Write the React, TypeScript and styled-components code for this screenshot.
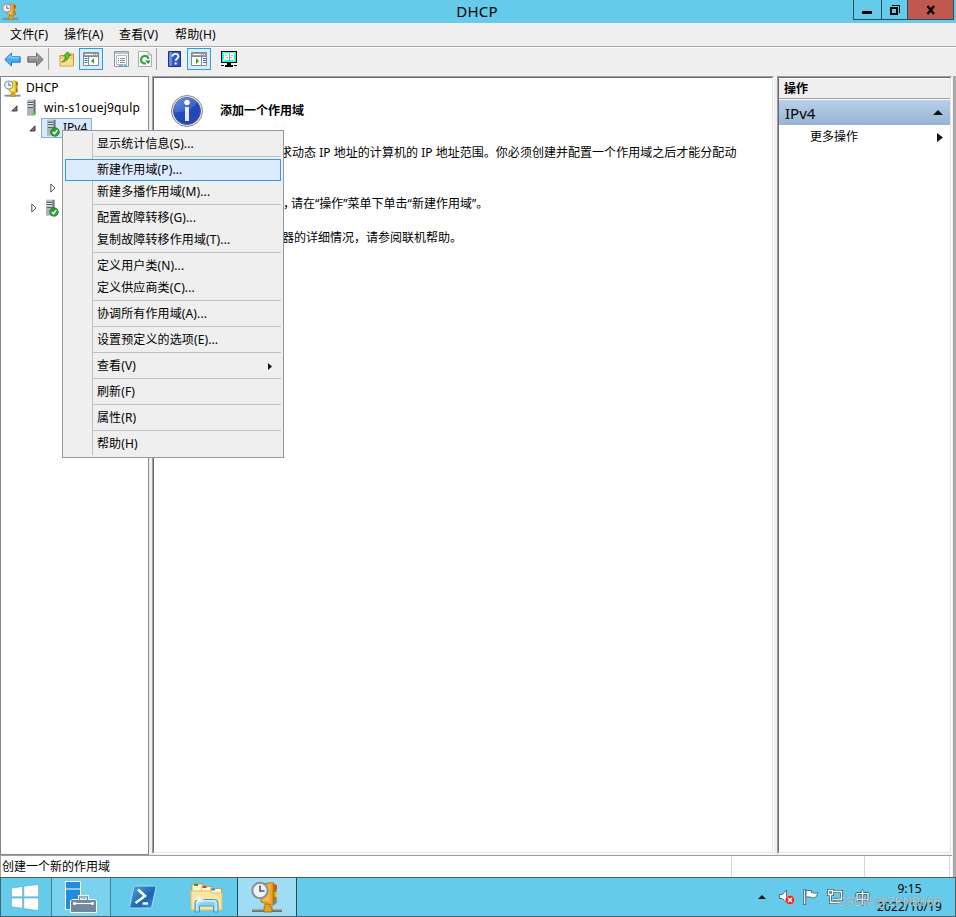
import React from "react";
import styled, { createGlobalStyle } from "styled-components";

const Global = createGlobalStyle`
  * { box-sizing: border-box; }
  body { margin: 0; overflow: hidden; }
`;

const sans = `"Noto Sans", "Noto Sans CJK SC", sans-serif`;

const Screen = styled.div`
  position: relative;
  width: 956px;
  height: 917px;
  display: flex;
  flex-direction: column;
  background: #efefef;
  color: #000;
  font: 12px/20px ${sans};
  white-space: nowrap;
  overflow: hidden;
`;

/* ---------- title bar ---------- */
const TitleBar = styled.header`
  display: grid;
  grid-template-columns: 103px 1fr 103px;
  height: 23px;
  background: #66cbea;
`;
const TitleIcon = styled.span`
  padding: 3px 0 0 2px;
  line-height: 0;
`;
const Title = styled.h1`
  margin: 0 2px 0 0;
  text-align: center;
  font-weight: 400;
  font-size: 15px;
  line-height: 23px;
  letter-spacing: 0.2px;
`;
const WindowButtons = styled.div`
  display: flex;
  height: 20px;
  border: 1px solid #2b4d59;
  border-top: 0;
  margin-right: 2px;
`;
const WindowButton = styled.button<{ $w: number; $close?: boolean }>`
  width: ${(p) => p.$w}px;
  padding: 0;
  border: 0;
  line-height: 0;
  background: ${(p) => (p.$close ? "#c1584f" : "transparent")};
  & + & { border-left: 1px solid #2b4d59; }
`;

/* ---------- menu bar and toolbar ---------- */
const MenuBar = styled.nav`
  display: flex;
  gap: 16px;
  height: 24px;
  padding: 2px 0 0 10px;
  border-bottom: 1px solid #a9a9a9;
  letter-spacing: 0.15px;
`;
const MenuLabel = styled.span<{ $w: number }>`
  width: ${(p) => p.$w}px;
`;
const ToolBar = styled.div`
  display: flex;
  align-items: center;
  height: 29px;
  padding: 0 0 6px 4px;
  border-top: 1px solid #fff;
`;
const Tool = styled.button<{ $active?: boolean; $ml?: number }>`
  width: 24px;
  height: 22px;
  margin: 0 0 0 ${(p) => p.$ml ?? 0}px;
  padding: 0;
  border: 1px solid ${(p) => (p.$active ? "#2a9fd8" : "transparent")};
  background: ${(p) => (p.$active ? "#dcebfb" : "transparent")};
  display: grid;
  place-items: center;
`;
const ToolDivider = styled.i<{ $ml: number }>`
  width: 1px;
  height: 22px;
  margin-left: ${(p) => p.$ml}px;
  background: #a5a5a5;
`;

/* ---------- panes ---------- */
const Workspace = styled.main`
  display: flex;
  height: 779px;
`;
const TreePane = styled.aside`
  width: 149px;
  margin-right: 3px;
  padding-top: 1px;
  border: 1px solid #828790;
  background: #fff;
`;
const TreeRow = styled.div<{ $indent: number }>`
  display: flex;
  align-items: center;
  height: 20px;
  padding-left: ${(p) => p.$indent}px;
`;
const TreeGap = styled.div`
  height: 40px;
`;
const Expander = styled.span`
  width: 13px;
  height: 20px;
  display: grid;
  place-items: center;
  margin-right: 2px;
`;
const NodeLabel = styled.span<{ $ml: number; $spacing?: number }>`
  margin-left: ${(p) => p.$ml}px;
  letter-spacing: ${(p) => p.$spacing ?? 0}px;
`;
const SelectedNode = styled.span`
  display: flex;
  align-items: center;
  width: 51px;
  height: 20px;
  padding-left: 1px;
  border: 1px solid #84acdd;
  background: #d9e8fb;
  line-height: 18px;
`;
const SunkenPane = styled.section<{ $w: number; $ml?: number }>`
  width: ${(p) => p.$w}px;
  height: 778px;
  margin-left: ${(p) => p.$ml ?? 0}px;
  border: 1px solid;
  border-color: #a0a0a0 #fff #fff #a0a0a0;
`;
const SunkenInner = styled.div`
  height: 100%;
  border: 1px solid;
  border-color: #696969 #e3e3e3 #e3e3e3 #696969;
  background: #fff;
`;
const Heading = styled.div`
  display: flex;
  align-items: center;
  height: 34px;
  margin: 16px 0 0 16px;
`;
const HeadingText = styled.h2`
  margin: 0 0 0 16px;
  font-size: 12px;
  line-height: 20px;
  font-weight: 700;
`;
const Para = styled.p<{ $top: number; $left: number; $spacing?: number }>`
  margin: ${(p) => p.$top}px 0 0 ${(p) => p.$left}px;
  line-height: 20px;
  letter-spacing: ${(p) => p.$spacing ?? 0}px;
`;
const Comma = styled.span`
  display: inline-block;
  width: 12px;
  padding-left: 4px;
`;
const ActionsTitle = styled.h3`
  margin: 0;
  padding-left: 5px;
  height: 21px;
  border-top: 1px solid #fff;
  border-bottom: 1px solid #a0a0a0;
  background: #efefef;
  font-size: 12px;
  line-height: 19px;
`;
const ActionsGroup = styled.div`
  display: flex;
  align-items: center;
  justify-content: space-between;
  height: 26px;
  padding: 0 7px 0 6px;
  border-top: 1px solid #fff;
  background: linear-gradient(#b9d0e9, #98b3d3);
  font-size: 15px;
`;
const ActionItem = styled.div`
  display: flex;
  align-items: center;
  justify-content: space-between;
  height: 24px;
  padding: 0 7px 0 31px;
`;
const Edge = styled.i`
  flex: 1;
  margin-left: 1px;
  background: #ababab;
  height: 801px;
`;

/* ---------- status bar ---------- */
const StatusBar = styled.footer`
  display: flex;
  width: 952px;
  height: 22px;
  border-top: 1px solid #a0a0a0;
  border-left: 1px solid #a0a0a0;
  background: #fff;
`;
const StatusCell = styled.span<{ $w: number }>`
  width: ${(p) => p.$w}px;
  height: 21px;
  padding-left: 1px;
  line-height: 22px;
  border-right: 1px solid #d7d7d7;
`;

/* ---------- taskbar ---------- */
const TaskBar = styled.div`
  display: flex;
  height: 40px;
  border: 1px solid #48606c;
  background: #66cbea;
`;
const TaskButton = styled.button<{ $w: number; $tone?: "open" | "active" }>`
  width: ${(p) => p.$w}px;
  height: 38px;
  padding: 0;
  display: grid;
  place-items: center;
  border: 0 solid ${(p) => (p.$tone === "active" ? "#1f4a59" : "#3f7f95")};
  border-width: ${(p) => (p.$tone ? "0 1px" : "0")};
  background: ${(p) => (p.$tone === "active" ? "#a0dcf3" : p.$tone === "open" ? "#7ad2ee" : "transparent")};
`;
const Tray = styled.div`
  display: flex;
  align-items: center;
  gap: 8px;
  margin-left: auto;
`;
const ShowHidden = styled.span`
  margin-right: 5px;
  line-height: 0;
`;
const InputMode = styled.span`
  width: 15px;
  margin-left: 3px;
  color: #fff;
  font-size: 15px;
  text-shadow: 1px 0 #3b6271, -1px 0 #3b6271, 0 1px #3b6271, 0 -1px #3b6271;
`;
const Clock = styled.div`
  width: 75px;
  margin: 0 8px 0 -6px;
  text-align: center;
  line-height: 18px;
  padding-top: 1px;
  letter-spacing: 0.1px;
`;
const Watermark = styled.span`
  position: absolute;
  left: 837px;
  top: 892px;
  font: 12.2px/20px "Liberation Sans", sans-serif;
  color: rgba(225, 232, 236, 0.72);
  text-shadow: 0 0 1px rgba(70, 90, 100, 0.8);
`;

/* ---------- context menu ---------- */
const ContextMenu = styled.div`
  position: absolute;
  left: 62px;
  top: 130px;
  width: 222px;
  padding: 2px;
  border: 1px solid #979797;
  background: linear-gradient(90deg, transparent 27px, #c0c0c0 27px, #c0c0c0 28px, transparent 28px) 2px 2px / 216px 322px no-repeat #efefef;
`;
const MenuItem = styled.div<{ $hot?: boolean }>`
  display: flex;
  align-items: center;
  justify-content: space-between;
  height: 22px;
  padding: 0 8px 0 31px;
  border: 1px solid ${(p) => (p.$hot ? "#2a9fe0" : "transparent")};
  background: ${(p) => (p.$hot ? "#dcebfd" : "transparent")};
  line-height: 20px;
  letter-spacing: 0.12px;
`;
const MenuRule = styled.div`
  height: 1px;
  margin: 1px 0 2px 28px;
  background: #c0c0c0;
`;

/* ---------- drawings ---------- */
const DhcpIcon = ({ size = 16, tree = false }: { size?: number; tree?: boolean }) => (
  <svg width={size} height={size} viewBox="0 0 32 32">
    <path d="M1 29.500h30" stroke="#6f6f6f" strokeWidth="3" />
    <path d="M1 28.800h30" stroke="#bdbdbd" strokeWidth="1" />
    <path d="M14 23h5v3h2v5h-8v-5h1z" fill="#e5a51d" stroke="#99680e" strokeWidth=".8" />
    <path d="M22 2l3.500 2v18L22 24.500z" fill="#b06f10" />
    <path d="M23.500 4H26v5h-2.500z" fill="#df4a2a" />
    <path d="M23.500 11H26v5h-2.500z" fill="#f0c020" />
    <path d="M23.500 18H26v4h-2.500z" fill="#4b9fc5" />
    <path d="M10 3l12-1.500v23L10 21z" fill={tree ? "#f3dc27" : "#eda62a"} stroke={tree ? "#a99312" : "#bd7a15"} />
    <path d="M11.500 5l7-.8v17l-7-2z" fill={tree ? "#fff16a" : "#f8c65c"} opacity=".7" />
    <circle cx="9" cy="9.500" r="7.700" fill="#edf3f6" stroke="#868f96" strokeWidth="2" />
    <path d="M9 4.500V10h4.500" fill="none" stroke="#4c5a64" strokeWidth="1.600" />
  </svg>
);

const ServerIcon = ({ ok = false }: { ok?: boolean }) => (
  <svg width="17" height="18" viewBox="0 0 17 18">
    <path d="M4 1.500l1-1h7.500v15l-1 1H4z" fill="#c2cdd0" />
    <path d="M4 1.500h6.500v15H4z" fill="#a9b7bb" />
    <path d="M10.500 1.500l2-1v15l-2 1z" fill="#65757a" />
    <path d="M5 3.500h5M5 5.500h5M5 8.500h5" stroke="#4f5f65" />
    <path d="M5 4.500h5M5 7h5" stroke="#edf3f4" />
    {ok ? (
      <>
        <circle cx="12" cy="13" r="4.300" fill="#2fa02f" stroke="#167220" strokeWidth=".7" />
        <path d="M9.800 13l1.700 1.800 2.800-3.700" fill="none" stroke="#fff" strokeWidth="1.500" />
      </>
    ) : (
      <path d="M9 13.500h2.500v2H9z" fill="#5ee819" />
    )}
  </svg>
);

const Opened = () => (
  <svg width="7" height="7" viewBox="0 0 7 7"><path d="M6 .8V6H.8z" fill="#777" stroke="#333" strokeWidth=".9" /></svg>
);
const Closed = () => (
  <svg width="6" height="10" viewBox="0 0 6 10"><path d="M.8 1v8L5 5z" fill="#fff" stroke="#444" strokeWidth=".9" /></svg>
);

const Arrow = ({ back = false }: { back?: boolean }) => (
  <svg width="17" height="15" viewBox="0 0 17 15">
    <path
      d={back ? "M.8 7.500L7.500 1v3.800h8.700v5.400H7.500V14z" : "M16.200 7.500L9.500 1v3.800H.8v5.400h8.700V14z"}
      fill={back ? "#3fb0f2" : "#929292"}
      stroke={back ? "#2379bb" : "#686868"}
    />
    <path d={back ? "M3.500 6.500L7 3.300v2.500h8" : "M2 5.800h8.500V3.500"} fill="none" stroke={back ? "#9bdcff" : "#c2c2c2"} />
  </svg>
);

const FolderUp = () => (
  <svg width="16" height="16" viewBox="0 0 16 16">
    <path d="M1 4.500h6l1-1.500h6.500v12H1z" fill="#f0cf71" stroke="#c69a3c" />
    <path d="M1.500 8h12.500v6.500H1.500z" fill="#f8de8f" />
    <path d="M2.500 11C5 10 6 8 6.500 5H4.500L8.500.8 12 4.500h-2C9.500 8 7 11 2.500 11z" fill="#58c229" stroke="#2f8a17" strokeWidth=".7" />
  </svg>
);

const PaneIcon = ({ right = false }: { right?: boolean }) => (
  <svg width="16" height="14" viewBox="0 0 16 14">
    <path d="M.5.500h15v13H.5z" fill="#fff" stroke="#818a95" />
    <path d="M1 1h14v3H1z" fill="#929ca8" />
    <path d="M2 2.500h8M11 2.500h1M13 2.500h1" stroke="#fff" />
    {right ? (
      <>
        <path d="M10.500 5v9M.5 4.500h15" stroke="#818a95" />
        <path d="M12 6.500h3M12 8.500h3M12 10.500h3" stroke="#3f78b4" />
        <path d="M5 6v6l3-3z" fill="#35a51c" />
      </>
    ) : (
      <>
        <path d="M5.500 5v9M.5 4.500h15" stroke="#818a95" />
        <path d="M1.500 6.500h3M1.500 8.500h3M1.500 10.500h3" stroke="#3f78b4" />
        <path d="M11 6v6L8 9z" fill="#35a51c" />
      </>
    )}
  </svg>
);

const PropertiesIcon = () => (
  <svg width="15" height="16" viewBox="0 0 15 16">
    <path d="M.5.500h14v15H.5z" fill="#fafafa" stroke="#9098a2" />
    <path d="M1 2h13" stroke="#a9b0b8" strokeWidth="1.500" />
    <path d="M2.500 4.500h10v9h-10z" fill="#fff" stroke="#b4bac2" />
    <path d="M4 7.500h1M4 9.500h1M4 11.500h1M6 7.500h5M6 9.500h5M6 11.500h5" stroke="#7d8996" />
    <path d="M5 14.500h4M10 14.500h3" stroke="#4eb4d9" />
  </svg>
);

const RefreshIcon = () => (
  <svg width="14" height="16" viewBox="0 0 14 16">
    <path d="M.5.500h9.500l3.500 3.500v11.500H.5z" fill="#fdfdfd" stroke="#aaa" />
    <path d="M10 .5V4h3.500" fill="none" stroke="#aaa" />
    <path d="M10.600 8A3.800 3.800 0 1 0 8 12.300" fill="none" stroke="#2daa3a" strokeWidth="2.200" />
    <path d="M7 9.500h5.500L10.500 13z" fill="#189326" />
  </svg>
);

const HelpIcon = () => (
  <svg width="14" height="16" viewBox="0 0 14 16">
    <path d="M.5.500h12v15H.5z" fill="#3459c3" stroke="#1c2e85" />
    <path d="M1 1h3v14H1z" fill="#6a8be0" />
    <path d="M4.500 5.500C4.500 2 10.500 2 10.500 5.300c0 2.200-2.800 2.200-2.800 4.500" fill="none" stroke="#fff" strokeWidth="1.800" />
    <path d="M6.700 11.500h2v2h-2z" fill="#fff" />
  </svg>
);

const ConsoleIcon = () => (
  <svg width="16" height="16" viewBox="0 0 16 16" shapeRendering="crispEdges">
    <path d="M0 0h16v12H0z" fill="#000" />
    <path d="M1 1h14v10H1z" fill="#0ff" />
    <path d="M3 2h4l1 1 1-1h4v7H9l-1 1-1-1H3z" fill="#fff" />
    <path d="M2 1h2v2H2zM12 1h2v2h-2zM2 8h2v2H2zM12 8h2v2h-2z" fill="#f3ec35" />
    <path d="M8 3v7" stroke="#999" />
    <path d="M4 4.500h2M5 6.500h2M10 4.500h2M9 6.500h2" stroke="#bbb" />
    <path d="M6 12h4v2H6zM0 14h3v1H0zM4 14h8v2H4zM13 14h3v1h-3z" fill="#000" />
  </svg>
);

const InfoIcon = () => (
  <svg width="34" height="34" viewBox="0 0 34 34">
    <defs>
      <linearGradient id="info" x1="0" y1="0" x2="0.600" y2="1">
        <stop offset="0" stopColor="#5483dc" />
        <stop offset=".5" stopColor="#1f4cc0" />
        <stop offset="1" stopColor="#2345b4" />
      </linearGradient>
    </defs>
    <circle cx="17" cy="17" r="15.500" fill="#e8e8e8" stroke="#8a8a8a" />
    <circle cx="17" cy="17" r="13.500" fill="url(#info)" stroke="#4c5c90" />
    <path d="M4 18C8 19 23 17 27 8 22 1 8 2 4 13z" fill="#fff" opacity=".15" />
    <circle cx="17" cy="8.500" r="2.700" fill="#fff" />
    <path d="M15 13h4v14h-4z" fill="#e9eaf0" />
  </svg>
);

const WindowsLogo = () => (
  <svg width="30" height="27" viewBox="0 0 30 27">
    <path d="M.5 4.200L11.500 2.500v10.300H.5zM12.800 2.300L27.500.500v12.300H12.800zM.5 14h11v10.300L.5 22.700zM12.800 14h14.700v12.500l-14.700-2z" fill="#fff" stroke="#4aa3c0" strokeWidth=".5" />
  </svg>
);

const ServerManager = () => (
  <svg width="34" height="34" viewBox="0 0 34 34">
    <path d="M1.500 1.500h15v28h-15z" fill="#1f8ddb" stroke="#fff" />
    <path d="M1.500 9h15" stroke="#fff" />
    <path d="M15.500 20v-3.500h8V20" fill="none" stroke="#fff" strokeWidth="3" />
    <path d="M8 19.500h23l1.500 1.500v11.500h-26V21z" fill="#71889a" stroke="#fff" />
    <path d="M15.500 20v-3.200h8V20" fill="none" stroke="#71889a" strokeWidth="1.200" />
    <path d="M9 23.500h21" stroke="#fff" strokeWidth="1.200" />
    <path d="M10.500 22v3M28.500 22v3" stroke="#fff" strokeWidth="2" />
  </svg>
);

const PowerShell = () => (
  <svg width="28" height="24" viewBox="0 0 28 24">
    <defs>
      <linearGradient id="ps" x1="0" y1="0" x2="1" y2="1">
        <stop offset="0" stopColor="#4fa4dc" />
        <stop offset=".6" stopColor="#1b66ae" />
        <stop offset="1" stopColor="#3d95cf" />
      </linearGradient>
    </defs>
    <path d="M6.500 1h19c1.200 0 1.600.8 1.300 2L23 21c-.3 1.200-1 2-2.200 2H2.200C1 23 .6 22.200.9 21L4.500 3c.3-1.200.8-2 2-2z" fill="url(#ps)" stroke="#a8d9ef" />
    <path d="M9 4.500l7 6.500L6.500 18" fill="none" stroke="#fff" strokeWidth="2.600" />
    <path d="M13.500 18.500H19" stroke="#fff" strokeWidth="2.300" />
  </svg>
);

const Explorer = () => (
  <svg width="33" height="31" viewBox="0 0 33 31">
    <path d="M1.500 4l2-2.500h9l1.500 3h8l1 2h8.500v18h-30z" fill="#edcf77" stroke="#c5a14b" />
    <path d="M3 3h8v6H3zM12 5h8v5h-8zM21 7h10v4H21z" fill="#fff7d8" />
    <path d="M4 2h4v2H4z" fill="#19a53a" />
    <path d="M12.500 4h4v2h-4z" fill="#d83c25" />
    <path d="M21 6.500h4v2h-4z" fill="#1b91d9" />
    <path d="M1 9h19l2 2h10v17H1z" fill="#f8e5a0" stroke="#dfbf66" />
    <path d="M5 30V21q0-3.500 3.500-3.500h16Q28 17.500 28 21v9h-4.500v-6h-14v6z" fill="#8fd0f0" stroke="#3c9ecb" />
    <path d="M7 29v-8q0-2 2-2h15q2 0 2 2v8" fill="none" stroke="#d7f1fc" strokeWidth="1.300" />
    <path d="M9 13v9M4.500 17.500h9M6 14.500l6 6M12 14.500l-6 6" stroke="#fff" strokeWidth=".8" />
  </svg>
);

const Triangle = ({ dir, w, h }: { dir: "up" | "right"; w: number; h: number }) => (
  <svg width={w} height={h} viewBox="0 0 10 10" preserveAspectRatio="none">
    <path d={dir === "up" ? "M0 10L5 0l5 10z" : "M0 0l10 5-10 5z"} fill="#111" />
  </svg>
);

const Speaker = () => (
  <svg width="16" height="16" viewBox="0 0 16 16">
    <path d="M.5 5.500h3l4-4.500v13l-4-4.500h-3z" fill="#fff" stroke="#355560" strokeWidth=".8" />
    <circle cx="11" cy="11" r="4.700" fill="#dd2b24" stroke="#f8d1cc" strokeWidth=".5" />
    <path d="M9 9l4 4M13 9l-4 4" stroke="#fff" strokeWidth="1.600" />
  </svg>
);
const Flag = () => (
  <svg width="16" height="16" viewBox="0 0 16 16">
    <path d="M.7.700h2v14.800h-2z" fill="#fff" stroke="#355560" strokeWidth=".8" />
    <path d="M3 1.500h5.500v2c2 .8 4 .8 6.500.2-1 2-1.500 3.500-2.500 4.800-2 .8-3.500.3-5-.5H3z" fill="#fff" stroke="#355560" strokeWidth=".8" />
  </svg>
);
const Network = () => (
  <svg width="17" height="16" viewBox="0 0 17 16">
    <path d="M6 2.500h8.500v8H6M7 13.500h6M1.500 1.500h4v4h-4zM3.500 5.500v8H7" fill="none" stroke="#3b6271" strokeWidth="3" />
    <path d="M6 2.500h8.500v8H6M7 13.500h6M1.500 1.500h4v4h-4zM3.500 5.500v8H7" fill="none" stroke="#fff" strokeWidth="1.300" />
  </svg>
);

const menuEntries: (string | null)[] = [
  "显示统计信息(S)...",
  null,
  "新建作用域(P)...",
  "新建多播作用域(M)...",
  null,
  "配置故障转移(G)...",
  "复制故障转移作用域(T)...",
  null,
  "定义用户类(N)...",
  "定义供应商类(C)...",
  null,
  "协调所有作用域(A)...",
  null,
  "设置预定义的选项(E)...",
  null,
  "查看(V)",
  null,
  "刷新(F)",
  null,
  "属性(R)",
  null,
  "帮助(H)",
];

export default function App() {
  return (
    <Screen>
      <Global />
      <TitleBar>
        <TitleIcon><DhcpIcon size={17} /></TitleIcon>
        <Title>DHCP</Title>
        <WindowButtons>
          <WindowButton $w={27}>
            <svg width="12" height="12"><path d="M1 7h10v3H1z" fill="#000" /></svg>
          </WindowButton>
          <WindowButton $w={27}>
            <svg width="11" height="12"><path d="M2 4h6v6H2z" fill="none" stroke="#000" strokeWidth="2" /><path d="M3 1.500h7.500V9" fill="none" stroke="#000" /></svg>
          </WindowButton>
          <WindowButton $w={46} $close>
            <svg width="10" height="10"><path d="M1.500 1l6.500 8M8 1L1.500 9" stroke="#000" strokeWidth="2.300" /></svg>
          </WindowButton>
        </WindowButtons>
      </TitleBar>

      <MenuBar>
        <MenuLabel $w={38}>文件(F)</MenuLabel>
        <MenuLabel $w={39}>操作(A)</MenuLabel>
        <MenuLabel $w={40}>查看(V)</MenuLabel>
        <MenuLabel $w={42}>帮助(H)</MenuLabel>
      </MenuBar>

      <ToolBar>
        <Tool $ml={-4}><Arrow back /></Tool>
        <Tool $ml={-1}><Arrow /></Tool>
        <ToolDivider $ml={1} />
        <Tool $ml={6}><FolderUp /></Tool>
        <Tool $active><PaneIcon /></Tool>
        <Tool $ml={6}><PropertiesIcon /></Tool>
        <Tool><RefreshIcon /></Tool>
        <ToolDivider $ml={-1} />
        <Tool $ml={6}><HelpIcon /></Tool>
        <Tool $active><PaneIcon right /></Tool>
        <Tool $ml={6}><ConsoleIcon /></Tool>
      </ToolBar>

      <Workspace>
        <TreePane>
          <TreeRow $indent={3}>
            <DhcpIcon size={17} tree />
            <NodeLabel $ml={5}>DHCP</NodeLabel>
          </TreeRow>
          <TreeRow $indent={7}>
            <Expander><Opened /></Expander>
            <ServerIcon />
            <NodeLabel $ml={4} $spacing={0.2}>win-s1ouej9qulp</NodeLabel>
          </TreeRow>
          <TreeRow $indent={25}>
            <Expander><Opened /></Expander>
            <SelectedNode>
              <ServerIcon ok />
              <NodeLabel $ml={3}>IPv4</NodeLabel>
            </SelectedNode>
          </TreeRow>
          <TreeGap />
          <TreeRow $indent={45}><Expander><Closed /></Expander></TreeRow>
          <TreeRow $indent={26}>
            <Expander><Closed /></Expander>
            <ServerIcon ok />
          </TreeRow>
        </TreePane>

        <SunkenPane $w={622}>
          <SunkenInner>
            <Heading>
              <InfoIcon />
              <HeadingText>添加一个作用域</HeadingText>
            </Heading>
            <Para $top={15} $left={126} $spacing={0.03}>求动态 IP 地址的计算机的 IP 地址范围。你必须创建并配置一个作用域之后才能分配动</Para>
            <Para $top={31} $left={125}><Comma>，</Comma>请在“操作”菜单下单击“新建作用域”。</Para>
            <Para $top={14} $left={128}>器的详细情况，请参阅联机帮助。</Para>
          </SunkenInner>
        </SunkenPane>

        <SunkenPane $w={175} $ml={3}>
          <SunkenInner>
            <ActionsTitle>操作</ActionsTitle>
            <ActionsGroup>
              IPv4
              <Triangle dir="up" w={10} h={5} />
            </ActionsGroup>
            <ActionItem>
              更多操作
              <Triangle dir="right" w={6} h={9} />
            </ActionItem>
          </SunkenInner>
        </SunkenPane>
        <Edge />
      </Workspace>

      <StatusBar>
        <StatusCell $w={731}>创建一个新的作用域</StatusCell>
        <StatusCell $w={133} />
        <StatusCell $w={85} />
      </StatusBar>

      <TaskBar>
        <TaskButton $w={50}><WindowsLogo /></TaskButton>
        <TaskButton $w={60} $tone="open"><ServerManager /></TaskButton>
        <TaskButton $w={64}><PowerShell /></TaskButton>
        <TaskButton $w={62}><Explorer /></TaskButton>
        <TaskButton $w={60} $tone="active"><DhcpIcon size={32} /></TaskButton>
        <Tray>
          <ShowHidden><Triangle dir="up" w={8} h={4} /></ShowHidden>
          <Speaker />
          <Flag />
          <Network />
          <InputMode>中</InputMode>
          <Clock>
            9:15
            <br />
            2022/10/19
          </Clock>
        </Tray>
      </TaskBar>

      <ContextMenu>
        {menuEntries.map((label, i) =>
          label === null ? (
            <MenuRule key={i} />
          ) : (
            <MenuItem key={i} $hot={i === 2}>
              {label}
              {label === "查看(V)" && <Triangle dir="right" w={4} h={7} />}
            </MenuItem>
          ),
        )}
      </ContextMenu>
      <Watermark>CSDN @ZKNB666</Watermark>
    </Screen>
  );
}
